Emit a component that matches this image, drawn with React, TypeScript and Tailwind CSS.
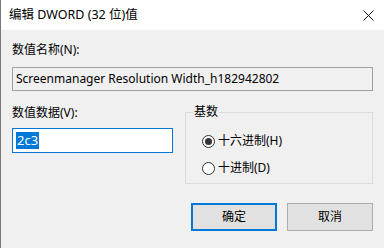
import React from 'react'

const font = { fontFamily: '"Noto Sans", "Noto Sans CJK SC", sans-serif' }

const Radio = ({ label, checked }: { label: string, checked?: boolean }) => {
  return (
    <div className="flex flex-row items-center h-[16px]">
      <div className="flex items-center justify-center w-[13px] h-[13px] rounded-full border border-[#333] bg-white">
        {checked && <div className="w-[7px] h-[7px] rounded-full bg-[#333]" />}
      </div>
      <span className="ml-[3px] text-[12px] leading-[16px] text-black">{label}</span>
    </div>
  )
}

const App = () => {
  return (
    <div className="w-[384px] h-[248px] flex flex-col bg-[#f0f0f0] border-l border-[#7a7a7a] overflow-hidden" style={font}>
      {/* title bar */}
      <div className="h-[30px] bg-white flex flex-row items-center justify-between pl-[8px] pr-[10px] shrink-0">
        <span className="text-[12.5px] leading-[16px] text-black">编辑 DWORD (32 位)值</span>
        <svg width="11" height="11" viewBox="0 0 11 11">
          <path d="M0.5 0.5 L10.5 10.5 M10.5 0.5 L0.5 10.5" stroke="#111" strokeWidth="1" fill="none" />
        </svg>
      </div>

      <div className="flex flex-col pl-[11px] pr-[11px]">
        <span className="mt-[12px] text-[12px] leading-[16px] text-black">数值名称(N):</span>
        <div className="mt-[9px] h-[24px] border border-[#a0a0a0] bg-[#f0f0f0] flex items-center pl-[3px]">
          <span className="text-[12px] leading-[16px] text-black">Screenmanager Resolution Width_h182942802</span>
        </div>

        <div className="mt-[14px] flex flex-row">
          <div className="w-[161px] flex flex-col">
            <span className="text-[12px] leading-[16px] text-black">数值数据(V):</span>
            <div className="mt-[7px] h-[25px] border border-[#0078d7] bg-white flex items-center pl-[3px]">
              <span className="bg-[#0078d7] text-white text-[13px] leading-[17px] px-[1px]">2c3</span>
            </div>
          </div>
          <div className="ml-[12px] mt-[7px] relative w-[188px] h-[72px] border border-[#dcdcdc] flex flex-col pl-[16px] pt-[20px] gap-[11px]">
            <span className="absolute left-[7px] top-[-9px] bg-[#f0f0f0] px-[1px] text-[12px] leading-[16px] text-black">基数</span>
            <Radio label="十六进制(H)" checked />
            <Radio label="十进制(D)" />
          </div>
        </div>

        <div className="mt-[19px] flex flex-row justify-end gap-[10px]">
          <button className="w-[86px] h-[28px] bg-[#e1e1e1] border-2 border-[#0078d7] text-[12px] text-black">确定</button>
          <button className="w-[86px] h-[28px] bg-[#e1e1e1] border border-[#adadad] text-[12px] text-black">取消</button>
        </div>
      </div>
    </div>
  )
}

export default App
